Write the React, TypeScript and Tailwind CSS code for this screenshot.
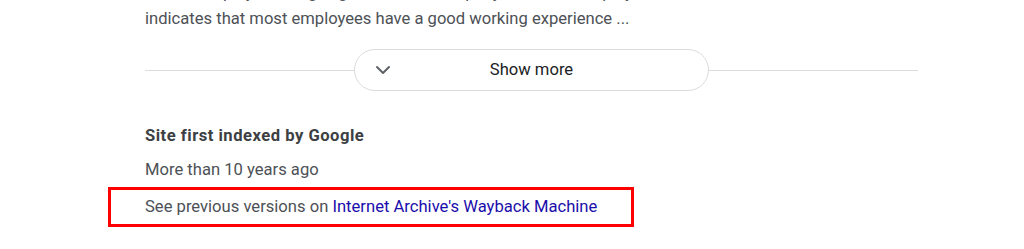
import { ChevronDown } from "lucide-react";

export default function App() {
  return (
    <div className="w-[1024px] h-[249px] overflow-hidden bg-white font-['Roboto',_'Liberation_Sans',_sans-serif]">
      {/* snippet tail */}
      <div className="pl-[145px] pr-[106px] mt-[-20px] text-[16.6px] leading-[26px] text-[#4d5156]">
        <p>Overall employee rating is good for the company, based on employee reviews</p>
        <p>indicates that most employees have a good working experience ...</p>
      </div>

      {/* show more */}
      <div className="flex items-center pl-[145px] pr-[106px] mt-[17px]">
        <div className="flex-1 h-px bg-[#dadce0]" />
        <button className="relative flex items-center justify-center w-[355px] h-[42px] rounded-full border border-[#dadce0] bg-white text-[16.6px] text-[#202124]">
          <ChevronDown className="absolute left-[16px] w-6 h-6 text-[#5f6368]" strokeWidth={2} />
          Show more
        </button>
        <div className="flex-1 h-px bg-[#dadce0]" />
      </div>

      {/* indexed */}
      <div className="pl-[145px] mt-[35px] flex flex-col">
        <h3 className="text-[16.6px] leading-[20px] font-bold tracking-[0.5px] text-[#3c4043]">Site first indexed by Google</h3>
        <p className="mt-[14px] text-[16.6px] leading-[20px] text-[#4d5156]">More than 10 years ago</p>
      </div>

      <div className="ml-[108px] mt-[7px] w-[526px] h-[40px] border-[3px] border-[#ff0000] flex items-center pl-[34px] text-[16.6px] text-[#4d5156]">
        <span>
          See previous versions on{" "}
          <a href="#" className="text-[#1a0dab]">Internet Archive's Wayback Machine</a>
        </span>
      </div>
    </div>
  );
}
